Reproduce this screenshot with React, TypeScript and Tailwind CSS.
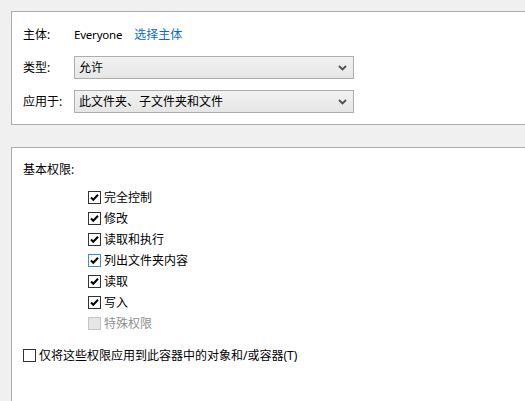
import React from "react"

const font = { fontFamily: '"Noto Sans", "Noto Sans CJK SC", sans-serif' }

function Combo({ value }: { value: string }) {
  return (
    <div className="flex h-[23px] w-[280px] items-center justify-between border border-[#adadad] bg-gradient-to-b from-[#f2f2f2] to-[#e6e6e6] pl-[4px] pr-[5px] text-[12px] text-black">
      <span className="leading-none">{value}</span>
      <svg width="9" height="6" viewBox="0 0 9 6" className="mr-[1px]">
        <path d="M1 1 L4.5 4.5 L8 1" fill="none" stroke="#505050" strokeWidth="1.8" />
      </svg>
    </div>
  )
}

type BoxState = "checked" | "focus" | "disabled" | "empty"

function Box({ state }: { state: BoxState }) {
  const border =
    state === "focus" ? "border-[#3a8ee0]" : state === "disabled" ? "border-[#c4c4c4]" : "border-[#333333]"
  const bg = state === "disabled" ? "bg-[#e6e6e6]" : "bg-white"
  const checked = state === "checked" || state === "focus"
  return (
    <div className={`flex h-[13px] w-[13px] shrink-0 items-center justify-center border ${border} ${bg}`}>
      {checked && (
        <svg width="11" height="11" viewBox="0 0 11 11">
          <path d="M2 5.5 L4.3 7.8 L9 2.8" fill="none" stroke="#000" strokeWidth="2" />
        </svg>
      )}
    </div>
  )
}

const perms: { label: string; state: BoxState }[] = [
  { label: "完全控制", state: "checked" },
  { label: "修改", state: "checked" },
  { label: "读取和执行", state: "checked" },
  { label: "列出文件夹内容", state: "focus" },
  { label: "读取", state: "checked" },
  { label: "写入", state: "checked" },
  { label: "特殊权限", state: "disabled" },
]

export default function App() {
  return (
    <div className="flex h-[401px] w-[525px] flex-col overflow-hidden bg-[#f0f0f0] pl-[11px] pt-[11px] text-[12px] text-black" style={font}>
      {/* Principal / type / applies-to */}
      <div className="flex flex-col border-y border-l border-[#adadad] bg-white pb-[11px] pl-[11px] pt-[12px]">
        <div className="flex h-[22px] items-center">
          <span className="w-[52px]">主体:</span>
          <span className="-ml-[1px] text-[11.5px] tracking-[-0.2px]">Everyone</span>
          <span className="ml-[12px] text-[#0a6cc8]">选择主体</span>
        </div>
        <div className="mt-[10px] flex items-center">
          <span className="w-[51px]">类型:</span>
          <Combo value="允许" />
        </div>
        <div className="mt-[11px] flex items-center">
          <span className="w-[51px]">应用于:</span>
          <Combo value="此文件夹、子文件夹和文件" />
        </div>
      </div>

      {/* Basic permissions */}
      <div className="mt-[22px] flex flex-1 flex-col border-l border-t border-[#adadad] bg-white pl-[11px] pt-[12px]">
        <div className="flex h-[20px] items-center">基本权限:</div>
        <div className="mt-[7px] flex flex-col pl-[65px]">
          {perms.map((p) => (
            <div key={p.label} className="flex h-[21px] items-center gap-[3px]">
              <Box state={p.state} />
              <span className={p.state === "disabled" ? "text-[#8f8f8f]" : ""}>{p.label}</span>
            </div>
          ))}
        </div>
        <div className="mt-[11px] flex h-[21px] items-center gap-[3px]">
          <Box state="empty" />
          <span>仅将这些权限应用到此容器中的对象和/或容器(T)</span>
        </div>
      </div>
    </div>
  )
}
